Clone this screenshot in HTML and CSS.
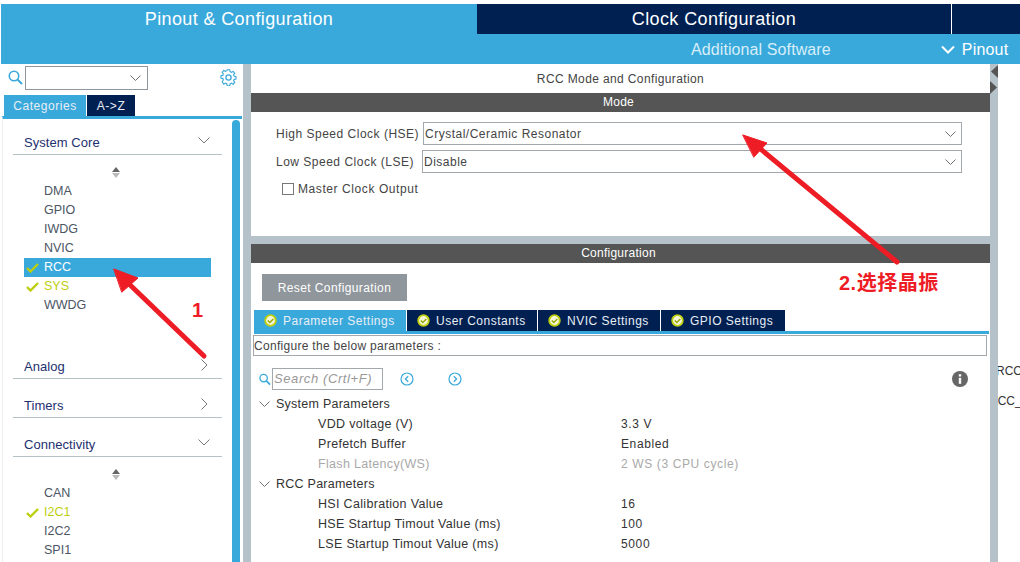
FILE: index.html
```html
<!DOCTYPE html>
<html lang="en">
<head>
<meta charset="utf-8">
<title>RCC Mode and Configuration</title>
<link rel="stylesheet" href="styles.css">
</head>
<body>
<div class="app">
  <div class="top-row">
    <div class="top-tab active">Pinout &amp; Configuration</div>
    <div class="top-tab clock">Clock Configuration</div>
    <div class="top-tab extra"></div>
  </div>
  <div class="sub-row">
    <span class="additional">Additional Software</span>
    <span class="pinout"><svg class="pin-chev" width="14" height="9" viewBox="0 0 14 9"><path d="M1 1.500l6 6 6-6" fill="none" stroke="#fff" stroke-width="2"/></svg>Pinout</span>
  </div>
  <div class="content">
    <aside class="left">
      <div class="search-row">
        <svg class="s-icon" width="15" height="15" viewBox="0 0 15 15"><circle cx="6" cy="6" r="4.700" fill="none" stroke="#39a9dc" stroke-width="1.600"/><path d="M9.500 9.500l4.500 4.500" stroke="#39a9dc" stroke-width="2"/></svg>
        <div class="combo"><svg width="11" height="6" viewBox="0 0 11 6"><path d="M.5.5l5 5 5-5" fill="none" stroke="#6b7075"/></svg></div>
        <svg class="gear" width="17" height="17" viewBox="0 0 17 17"><circle cx="8.500" cy="8.500" r="2.600" fill="none" stroke="#39a9dc" stroke-width="1.300"/><path d="M7.200 1h2.600l.4 2 1.500.7 1.800-1 1.600 1.900-1.200 1.600.5 1.500 2 .5v2.500l-2 .5-.5 1.500 1.200 1.600-1.600 1.900-1.800-1-1.500.7-.4 2H7.200l-.4-2-1.500-.7-1.800 1L1.900 13.400l1.200-1.600-.5-1.500-2-.5V7.300l2-.5.5-1.500L1.900 3.600 3.500 1.700l1.800 1 1.500-.7z" transform="translate(.4 -.2) scale(.95)" fill="none" stroke="#39a9dc" stroke-width="1.200"/></svg>
      </div>
      <div class="cat-tabs">
        <div class="cat-tab on">Categories</div>
        <div class="cat-tab">A-&gt;Z</div>
      </div>
      <div class="cat-body">
        <div class="cat-list">
          <div class="sec first">System Core<svg class="chev down-chev" width="12" height="7" viewBox="0 0 12 7"><path d="M.5.5L6 6 11.500.5" fill="none" stroke="#777"/></svg></div>
          <div class="updown"><i class="up"></i><i class="down"></i></div>
          <ul class="items">
            <li>DMA</li>
            <li>GPIO</li>
            <li>IWDG</li>
            <li>NVIC</li>
            <li class="sel"><svg class="tick" width="13" height="10" viewBox="0 0 13 10"><path d="M1 5l3.500 3.500L12 1" fill="none" stroke="#bdcf0c" stroke-width="2.400"/></svg>RCC</li>
            <li class="ok"><svg class="tick" width="13" height="10" viewBox="0 0 13 10"><path d="M1 5l3.500 3.500L12 1" fill="none" stroke="#bdcf0c" stroke-width="2.400"/></svg>SYS</li>
            <li>WWDG</li>
          </ul>
          <div class="sec analog">Analog<svg class="chev right-chev" width="7" height="12" viewBox="0 0 7 12"><path d="M.5.5L6 6 .5 11.500" fill="none" stroke="#777"/></svg></div>
          <div class="sec">Timers<svg class="chev right-chev" width="7" height="12" viewBox="0 0 7 12"><path d="M.5.5L6 6 .5 11.500" fill="none" stroke="#777"/></svg></div>
          <div class="sec">Connectivity<svg class="chev down-chev" width="12" height="7" viewBox="0 0 12 7"><path d="M.5.5L6 6 11.500.5" fill="none" stroke="#777"/></svg></div>
          <div class="updown"><i class="up"></i><i class="down"></i></div>
          <ul class="items">
            <li>CAN</li>
            <li class="ok"><svg class="tick" width="13" height="10" viewBox="0 0 13 10"><path d="M1 5l3.500 3.500L12 1" fill="none" stroke="#bdcf0c" stroke-width="2.400"/></svg>I2C1</li>
            <li>I2C2</li>
            <li>SPI1</li>
          </ul>
        </div>
        <div class="scrollbar"></div>
      </div>
    </aside>
    <div class="gutter"></div>
    <main class="main">
      <section class="mode">
        <h1 class="title">RCC Mode and Configuration</h1>
        <div class="bar">Mode</div>
        <div class="field hse">
          <label>High Speed Clock (HSE)</label>
          <div class="select">Crystal/Ceramic Resonator<svg width="11" height="6" viewBox="0 0 11 6"><path d="M.5.5l5 5 5-5" fill="none" stroke="#6b7075"/></svg></div>
        </div>
        <div class="field lse">
          <label>Low Speed Clock (LSE)</label>
          <div class="select">Disable<svg width="11" height="6" viewBox="0 0 11 6"><path d="M.5.5l5 5 5-5" fill="none" stroke="#6b7075"/></svg></div>
        </div>
        <div class="check"><span class="box"></span>Master Clock Output</div>
      </section>
      <div class="hsep"></div>
      <section class="config">
        <div class="bar">Configuration</div>
        <button class="reset">Reset Configuration</button>
        <div class="param-tabs">
          <div class="ptab on"><svg width="13" height="13" viewBox="0 0 13 13"><circle cx="6.500" cy="6.500" r="5.300" fill="#f4f6d8" stroke="#bfcf0e" stroke-width="1.800"/><path d="M3.800 6.500l2 2 3.500-3.500" fill="none" stroke="#9aa80a" stroke-width="1.500"/></svg>Parameter Settings</div>
          <div class="ptab"><svg width="13" height="13" viewBox="0 0 13 13"><circle cx="6.500" cy="6.500" r="5.300" fill="#f4f6d8" stroke="#bfcf0e" stroke-width="1.800"/><path d="M3.800 6.500l2 2 3.500-3.500" fill="none" stroke="#9aa80a" stroke-width="1.500"/></svg>User Constants</div>
          <div class="ptab"><svg width="13" height="13" viewBox="0 0 13 13"><circle cx="6.500" cy="6.500" r="5.300" fill="#f4f6d8" stroke="#bfcf0e" stroke-width="1.800"/><path d="M3.800 6.500l2 2 3.500-3.500" fill="none" stroke="#9aa80a" stroke-width="1.500"/></svg>NVIC Settings</div>
          <div class="ptab"><svg width="13" height="13" viewBox="0 0 13 13"><circle cx="6.500" cy="6.500" r="5.300" fill="#f4f6d8" stroke="#bfcf0e" stroke-width="1.800"/><path d="M3.800 6.500l2 2 3.500-3.500" fill="none" stroke="#9aa80a" stroke-width="1.500"/></svg>GPIO Settings</div>
        </div>
        <div class="describe">Configure the below parameters :</div>
        <div class="find-row">
          <svg class="find-icon" width="13" height="13" viewBox="0 0 13 13"><circle cx="5" cy="5" r="4" fill="none" stroke="#39a9dc" stroke-width="1.400"/><path d="M8 8l4 4" stroke="#39a9dc" stroke-width="1.800"/></svg>
          <div class="find">Search (Crtl+F)</div>
          <svg class="nav first-nav" width="14" height="14" viewBox="0 0 14 14"><circle cx="7" cy="7" r="6" fill="none" stroke="#39a9dc" stroke-width="1.200"/><path d="M8.200 4.200L5.400 7l2.800 2.800" fill="none" stroke="#39a9dc" stroke-width="1.300"/></svg>
          <svg class="nav" width="14" height="14" viewBox="0 0 14 14"><circle cx="7" cy="7" r="6" fill="none" stroke="#39a9dc" stroke-width="1.200"/><path d="M5.800 4.200L8.600 7l-2.800 2.800" fill="none" stroke="#39a9dc" stroke-width="1.300"/></svg>
          <svg class="info" width="16" height="16" viewBox="0 0 16 16"><circle cx="8" cy="8" r="8" fill="#666"/><rect x="6.800" y="6.800" width="2.400" height="6" fill="#fff"/><rect x="6.800" y="3.200" width="2.400" height="2.300" fill="#fff"/></svg>
        </div>
        <div class="tree">
          <div class="row group"><svg width="11" height="6" viewBox="0 0 11 6"><path d="M.5.5l5 5 5-5" fill="none" stroke="#6b7075"/></svg>System Parameters</div>
          <div class="row"><span class="key">VDD voltage (V)</span><span class="val">3.3 V</span></div>
          <div class="row"><span class="key">Prefetch Buffer</span><span class="val">Enabled</span></div>
          <div class="row off"><span class="key">Flash Latency(WS)</span><span class="val">2 WS (3 CPU cycle)</span></div>
          <div class="row group"><svg width="11" height="6" viewBox="0 0 11 6"><path d="M.5.5l5 5 5-5" fill="none" stroke="#6b7075"/></svg>RCC Parameters</div>
          <div class="row"><span class="key">HSI Calibration Value</span><span class="val">16</span></div>
          <div class="row"><span class="key">HSE Startup Timout Value (ms)</span><span class="val">100</span></div>
          <div class="row"><span class="key">LSE Startup Timout Value (ms)</span><span class="val">5000</span></div>
        </div>
      </section>
    </main>
    <div class="gutter narrow">
      <svg width="8" height="32" viewBox="0 0 8 32"><path d="M8 1v13L1 7.500zM0 17v13l7-6.500z" fill="#555"/></svg>
    </div>
    <div class="clip">
      <div class="clip-a">RCC</div>
      <div class="clip-b">RCC_OSC</div>
    </div>
  </div>
  <svg class="marks" width="1020" height="562" viewBox="0 0 1020 562">
    <g fill="#ee1c25" stroke="#ee1c25" stroke-linecap="round">
      <path d="M204 356L127 282" stroke-width="5" fill="none"/>
      <path d="M114 269l24 9-16 14z" stroke-width="1"/>
      <path d="M897 262L757 146" stroke-width="5" fill="none"/>
      <path d="M743 135l24 8-13 14z" stroke-width="1"/>
    </g>
  </svg>
  <div class="note one">1</div>
  <div class="note two">2.选择晶振</div>
</div>
</body>
</html>
```

FILE: styles.css
```css
* { box-sizing: border-box; }
html, body { margin: 0; padding: 0; background: #fff; }
body { font-family: "Liberation Sans", Arial, sans-serif; font-size: 12px; color: #444; }
.app { position: relative; width: 1020px; height: 562px; overflow: hidden; padding-top: 4px; display: flex; flex-direction: column; }

.top-row { display: flex; height: 30px; flex: none; padding-left: 1px; }
.top-tab { display: flex; align-items: center; justify-content: center; color: #fff; font-size: 18px; letter-spacing: .38px; background: #002052; padding-top: 1px; }
.top-tab.active { width: 476px; background: #39a9dc; }
.top-tab.clock { border-right: 1px solid #fff; width: 475px; }
.top-tab.extra { flex: 1; }

.sub-row { height: 30px; flex: none; margin-left: 1px; background: #39a9dc; color: #fff; display: flex; align-items: center; font-size: 16px; padding-top: 1px; }
.additional { margin-left: 690px; color: #d7eef9; letter-spacing: .1px; }
.pinout { margin-left: 110px; display: flex; align-items: center; letter-spacing: .2px; }
.pin-chev { margin-right: 7px; }

.content { flex: 1; display: flex; min-height: 0; }
.left { width: 243px; flex: none; background: #fff; display: flex; flex-direction: column; }
.gutter { width: 8px; flex: none; background: #b6c2ca; }
.gutter.narrow { overflow: hidden; }
.gutter.narrow svg { display: block; }

.search-row { height: 31px; flex: none; display: flex; align-items: flex-start; padding: 2px 0 0 8px; }
.s-icon { margin: 4px 2px 0 0; flex: none; }
.combo { width: 123px; height: 24px; border: 1px solid #8f969c; display: flex; align-items: center; justify-content: flex-end; padding-right: 6px; flex: none; }
.gear { margin: 3px 0 0 72px; flex: none; }

.cat-tabs { display: flex; margin-left: 4px; height: 21px; flex: none; }
.cat-tab { background: #002052; color: #e8eef4; width: 48px; margin-left: 1px; display: flex; align-items: center; justify-content: center; letter-spacing: .55px; }
.cat-tab.on { background: #39a9dc; width: 82px; margin-left: 0; }

.cat-body { flex: 1; min-height: 0; border-top: 3px solid #39a9dc; margin-left: 2px; margin-right: 1px; display: flex; border-left: 1px solid #eee; padding-top: 1px; }
.cat-list { width: 229px; flex: none; }
.scrollbar { width: 8px; flex: none; background: #39a9dc; border-radius: 4px 4px 0 0; }

.sec { height: 39px; margin: 0 10px; width: 209px; border-bottom: 1px solid #b6c2ca; color: #1d2f6f; font-size: 13px; line-height: 15px; padding: 19px 0 0 11px; display: flex; justify-content: space-between; letter-spacing: .05px; }
.sec.first { height: 35px; padding-top: 15px; }
.sec.analog { margin-top: 25px; }
.chev { flex: none; }
.down-chev { margin: 2px 12px 0 0; }
.right-chev { margin: 0 14px 0 0; }
.updown { margin-left: 109px; margin-top: 12px; height: 12px; display: flex; flex-direction: column; align-items: flex-start; gap: 1px; }
.updown i { display: block; width: 0; height: 0; border-left: 4px solid transparent; border-right: 4px solid transparent; }
.updown .up { border-bottom: 5px solid #666; }
.updown .down { border-top: 5px solid #bbb; }

.items { list-style: none; margin: 3px 0 0 21px; padding: 0; width: 187px; }
.items li { height: 19px; line-height: 19px; padding-left: 20px; color: #4b5563; position: relative; font-size: 12.500px; }
.items .tick { position: absolute; left: 2px; top: 5px; }
.items .sel { background: #39a9dc; color: #fff; }
.items .ok { color: #bdcf0c; }

.main { width: 739px; flex: none; display: flex; flex-direction: column; }
.mode { height: 172px; flex: none; }
.title { margin: 0; height: 29px; font-size: 12px; font-weight: normal; text-align: center; line-height: 30px; color: #444; letter-spacing: .38px; }
.bar { height: 19px; background: #545554; color: #fff; text-align: center; line-height: 19px; font-size: 12px; padding-right: 4px; letter-spacing: .25px; }
.field { display: flex; align-items: center; height: 23px; padding-left: 25px; margin-top: 5px; font-size: 12px; letter-spacing: .5px; }
.field.hse { margin-top: 10px; }
.field label { width: 147px; flex: none; white-space: nowrap; }
.field.lse label { width: 146px; }
.select { flex: none; height: 23px; border: 1px solid #a3a8ac; display: flex; align-items: center; justify-content: space-between; padding: 0 5px 0 1px; }
.hse .select { width: 539px; }
.lse .select { width: 540px; }
.check { display: flex; align-items: center; margin: 5px 0 0 31px; letter-spacing: .58px; height: 22px; }
.box { width: 12px; height: 12px; border: 1px solid #777; margin-right: 4px; background: #fff; }
.hsep { height: 8px; flex: none; background: #b6c2ca; }

.config { flex: 1; min-height: 0; overflow: hidden; }
.reset { display: block; margin: 11px 0 0 11px; width: 145px; height: 27px; border: 0; background: #8f969c; color: #fff; font: 12px "Liberation Sans", Arial, sans-serif; letter-spacing: .39px; padding: 0; }
.param-tabs { display: flex; margin: 9px 0 0 3px; width: 735px; height: 24px; border-bottom: 3px solid #39a9dc; }
.ptab { background: #002052; color: #e8eef4; height: 21px; display: flex; align-items: center; padding-left: 10px; gap: 6px; letter-spacing: .5px; margin-right: 1px; }
.ptab:nth-child(1) { width: 152px; background: #39a9dc; }
.ptab:nth-child(2) { width: 130px; }
.ptab:nth-child(3) { width: 122px; }
.ptab:nth-child(4) { width: 124px; margin-right: 0; }
.describe { margin: 1px 0 0 2px; width: 734px; height: 21px; border: 1px solid #a3a8ac; line-height: 20px; padding-left: 0; letter-spacing: .3px; color: #444; }
.find-row { display: flex; align-items: center; height: 22px; margin-top: 12px; padding-left: 8px; }
.find-icon { flex: none; width: 12px; }
.find { width: 111px; height: 22px; margin-left: 1px; border: 1px solid #a3a8ac; line-height: 20px; padding-left: 1px; font-style: italic; color: #999; font-size: 13px; letter-spacing: .6px; white-space: nowrap; flex: none; overflow: hidden; }
.nav { margin-left: 34px; flex: none; }
.nav.first-nav { margin-left: 17px; }
.info { margin-left: 490px; flex: none; }
.tree { margin-top: 4px; }
.row { height: 20px; display: flex; align-items: center; padding-left: 67px; font-size: 12.500px; letter-spacing: .32px; color: #333; white-space: nowrap; }
.row .key { width: 303px; flex: none; }
.row .val { font-size: 12px; letter-spacing: .62px; }
.row.group { padding-left: 8px; letter-spacing: .25px; }
.row.group svg { margin-right: 6px; flex: none; }
.row.off { color: #a9a9a9; }

.clip { flex: 1; overflow: hidden; position: relative; min-width: 0; }
.clip-a, .clip-b { white-space: nowrap; position: absolute; color: #333; }
.clip-a { top: 300px; left: -2px; }
.clip-b { top: 330px; left: -9px; }

.marks { position: absolute; left: 0; top: 0; pointer-events: none; }
.note { position: absolute; color: #ee1c25; font-weight: bold; font-size: 20px; line-height: 24px; white-space: nowrap; }
.note.one { left: 192px; top: 298px; }
.note.two { left: 839px; top: 271px; letter-spacing: .5px; font-family: "Liberation Sans", "Noto Sans CJK SC", sans-serif; }
```
